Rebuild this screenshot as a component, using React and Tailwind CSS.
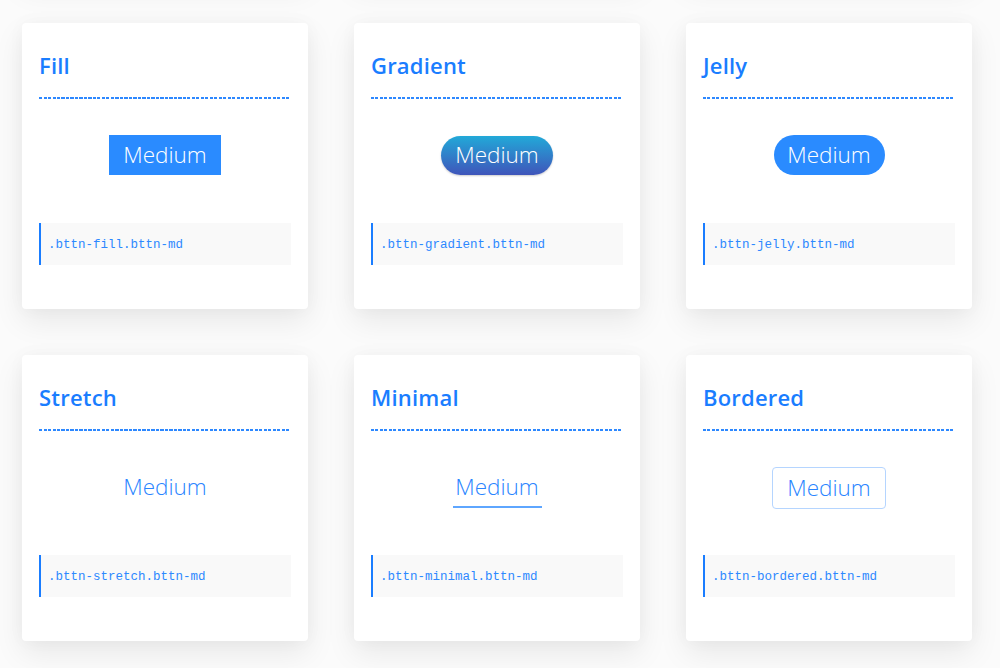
import React from "react";

const dash = "h-[2px] w-full bg-[repeating-linear-gradient(90deg,#2d88ff_0px,#2d88ff_3px,transparent_3px,transparent_4.5px)]";

function Card({ title, code, children }) {
  return (
    <div className="w-[286px] h-[286px] bg-white rounded-[4px] shadow-[0_12px_30px_rgba(0,0,0,0.08),0_0_18px_rgba(0,0,0,0.03)] px-[17px] pt-[28px] flex flex-col">
      <h3 className="text-[22px] leading-[28px] font-semibold text-[#1a7dff] font-['Open_Sans',sans-serif] tracking-[0.2px]">
        {title}
      </h3>
      <div className={`${dash} mt-[18px] w-[254px]`} />
      <div className="h-[40px] mt-[36px] flex items-center justify-center">{children}</div>
      <div className="mt-[48px] h-[42px] bg-[#f9f9f9] border-l-2 border-[#1a7dff] pl-[7px] pt-[2px] flex items-center">
        <span className="font-['Liberation_Mono',monospace] text-[12.5px] leading-none text-[#2d88ff]">{code}</span>
      </div>
    </div>
  );
}

const medium = "font-['Open_Sans',sans-serif] font-light text-[22.5px] leading-none";

export default function App() {
  return (
    <div className="w-[1000px] h-[668px] overflow-hidden bg-[#fbfbfb]">
      <div className="pl-[22px] -mt-[309px] grid grid-cols-[286px_286px_286px] gap-x-[46px] gap-y-[46px]">
        <div className="w-[286px] h-[286px] bg-white rounded-[4px] shadow-[0_12px_30px_rgba(0,0,0,0.08),0_0_18px_rgba(0,0,0,0.03)]" />
        <div className="w-[286px] h-[286px] bg-white rounded-[4px] shadow-[0_12px_30px_rgba(0,0,0,0.08),0_0_18px_rgba(0,0,0,0.03)]" />
        <div className="w-[286px] h-[286px] bg-white rounded-[4px] shadow-[0_12px_30px_rgba(0,0,0,0.08),0_0_18px_rgba(0,0,0,0.03)]" />

        <Card title="Fill" code=".bttn-fill.bttn-md">
          <button className={`${medium} w-[112px] h-[40px] bg-[#2a8bff] text-white`}>Medium</button>
        </Card>
        <Card title="Gradient" code=".bttn-gradient.bttn-md">
          <button className={`${medium} w-[112px] h-[39px] rounded-full bg-[linear-gradient(180deg,#22a9d8,#3f55ba)] text-white shadow-[0_1px_2px_rgba(0,0,0,0.2)]`}>Medium</button>
        </Card>
        <Card title="Jelly" code=".bttn-jelly.bttn-md">
          <button className={`${medium} w-[111px] h-[40px] rounded-full bg-[#2a8bff] text-white`}>Medium</button>
        </Card>

        <Card title="Stretch" code=".bttn-stretch.bttn-md">
          <span className={`${medium} text-[#2a85ff]`}>Medium</span>
        </Card>
        <Card title="Minimal" code=".bttn-minimal.bttn-md">
          <span className={`${medium} text-[#2a85ff] w-[89px] h-[40px] flex items-center justify-center border-b-2 border-[#5ea6ff] mt-[2px]`}>Medium</span>
        </Card>
        <Card title="Bordered" code=".bttn-bordered.bttn-md">
          <button className={`${medium} w-[114px] h-[42px] rounded-[4px] border-[1.5px] border-[#b5d5ff] text-[#2a85ff] mt-[2px]`}>Medium</button>
        </Card>
      </div>
    </div>
  );
}
